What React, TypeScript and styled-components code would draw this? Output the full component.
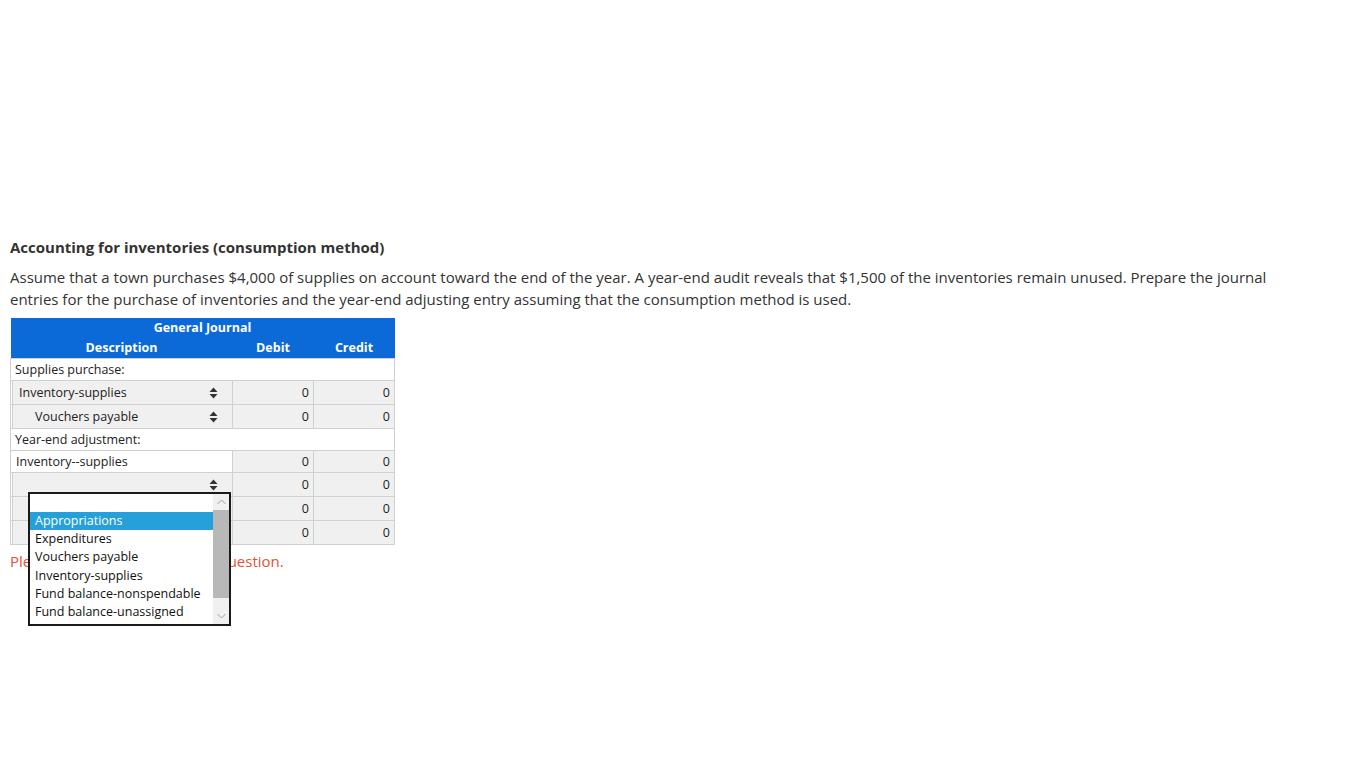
import styled, { createGlobalStyle } from 'styled-components';

const GlobalStyle = createGlobalStyle`
  body {
    margin: 0;
    background: #fff;
    font-family: "Open Sans", "Liberation Sans", sans-serif;
    color: #333;
  }
`;

const Page = styled.div`
  min-height: 768px;
  box-sizing: border-box;
  padding: 237px 10px 0 10px;
`;

const Title = styled.h3`
  margin: 0 0 9px 0;
  font-size: 15px;
  font-weight: 700;
  line-height: 20px;
  color: #333;
`;

const Prompt = styled.p`
  margin: 0 0 8px 0;
  font-size: 15px;
  line-height: 22px;
  max-width: 1275px;
  color: #333;
`;

const TableWrap = styled.div`
  position: relative;
  width: 384px;
`;

const Journal = styled.table`
  border-collapse: collapse;
  width: 384px;
  table-layout: fixed;
  font-size: 12.5px;
  color: #222;
`;

const HeadCell = styled.th`
  background: #0b6ad8;
  color: #fff;
  font-weight: 700;
  font-size: 12.5px;
  height: 20px;
  padding: 0;
  line-height: 20px;
  text-align: center;
`;

const LabelCell = styled.td`
  border: 1px solid #d0d0d0;
  background: #fff;
  height: 21px;
  padding: 0 0 0 4px;
  line-height: 20px;
`;

const DescCell = styled.td<{ $plain?: boolean }>`
  border: 1px solid #d0d0d0;
  background: #fff;
  height: ${p => (p.$plain ? '21px' : '23px')};
  padding: 0 0 0 1px;
`;

const SelectBox = styled.div<{ $indent?: boolean }>`
  display: flex;
  align-items: center;
  justify-content: space-between;
  height: 23px;
  padding: 0 14px 0 ${p => (p.$indent ? '22px' : '6px')};
  border-left: 1px solid #d0d0d0;
  background: #f0f0f0;
  white-space: nowrap;
`;

const PlainText = styled.div`
  padding-left: 4px;
  line-height: 21px;
`;

const NumCell = styled.td<{ $short?: boolean }>`
  border: 1px solid #d0d0d0;
  background: #f0f0f0;
  height: ${p => (p.$short ? '21px' : '23px')};
  padding: 0 4px 0 0;
  text-align: right;
`;

const Warning = styled.div`
  margin-top: 5px;
  font-size: 15px;
  color: #e0533a;
  line-height: 22px;
`;

const ListBox = styled.div`
  position: absolute;
  left: 18px;
  top: 174px;
  width: 199px;
  height: 130px;
  border: 2px solid #1a1a1a;
  background: #fff;
  display: flex;
  overflow: hidden;
  z-index: 2;
`;

const Options = styled.ul`
  list-style: none;
  margin: 0;
  padding: 0;
  flex: 1;
  overflow: hidden;
  font-size: 12.5px;
  color: #111;
`;

const Option = styled.li<{ $active?: boolean }>`
  height: 18.2px;
  line-height: 18px;
  padding-left: 5px;
  white-space: nowrap;
  background: ${p => (p.$active ? '#26a0da' : 'transparent')};
  color: ${p => (p.$active ? '#fff' : '#111')};
`;

const Blank = styled.li`
  height: 18px;
`;

const Scrollbar = styled.div`
  width: 16px;
  background: #f0f0f0;
  display: flex;
  flex-direction: column;
`;

const ScrollArrow = styled.div`
  height: 16px;
  display: flex;
  align-items: center;
  justify-content: center;
`;

const Track = styled.div`
  flex: 1;
  display: flex;
  flex-direction: column;
`;

const Thumb = styled.div`
  height: 88px;
  background: #b8b8b8;
`;

const SortIcon = () => (
  <svg width="9" height="12" viewBox="0 0 9 12">
    <path d="M4.5 0.5 L8.5 5 L0.5 5 Z" fill="#333" />
    <path d="M0.5 7 L8.5 7 L4.5 11.5 Z" fill="#333" />
  </svg>
);

const Chevron = (props: { up?: boolean }) => (
  <svg width="9" height="6" viewBox="0 0 9 6">
    <path
      d={props.up ? 'M0.5 5 L4.5 1 L8.5 5' : 'M0.5 1 L4.5 5 L8.5 1'}
      fill="none"
      stroke="#a0a0a0"
      strokeWidth="1"
    />
  </svg>
);

const accounts = [
  'Appropriations',
  'Expenditures',
  'Vouchers payable',
  'Inventory-supplies',
  'Fund balance-nonspendable',
  'Fund balance-unassigned',
  'Cash',
];

const SelectRow = (props: { label?: string; indent?: boolean }) => (
  <tr>
    <DescCell>
      <SelectBox $indent={props.indent}>
        <span>{props.label}</span>
        <SortIcon />
      </SelectBox>
    </DescCell>
    <NumCell>0</NumCell>
    <NumCell>0</NumCell>
  </tr>
);

const App = () => (
  <>
    <GlobalStyle />
    <Page>
      <Title>Accounting for inventories (consumption method)</Title>
      <Prompt>
        Assume that a town purchases $4,000 of supplies on account toward the end of the year. A year-end audit
        reveals that $1,500 of the inventories remain unused. Prepare the journal entries for the purchase of
        inventories and the year-end adjusting entry assuming that the consumption method is used.
      </Prompt>
      <TableWrap>
        <Journal>
          <colgroup>
            <col style={{ width: 222 }} />
            <col style={{ width: 81 }} />
            <col style={{ width: 81 }} />
          </colgroup>
          <thead>
            <tr>
              <HeadCell colSpan={3}>General Journal</HeadCell>
            </tr>
            <tr>
              <HeadCell>Description</HeadCell>
              <HeadCell>Debit</HeadCell>
              <HeadCell>Credit</HeadCell>
            </tr>
          </thead>
          <tbody>
            <tr>
              <LabelCell colSpan={3}>Supplies purchase:</LabelCell>
            </tr>
            <SelectRow label="Inventory-supplies" />
            <SelectRow label="Vouchers payable" indent />
            <tr>
              <LabelCell colSpan={3}>Year-end adjustment:</LabelCell>
            </tr>
            <tr>
              <DescCell $plain>
                <PlainText>Inventory--supplies</PlainText>
              </DescCell>
              <NumCell $short>0</NumCell>
              <NumCell $short>0</NumCell>
            </tr>
            <SelectRow />
            <SelectRow />
            <SelectRow />
          </tbody>
        </Journal>
        <ListBox>
          <Options>
            <Blank />
            {accounts.map((a, i) => (
              <Option key={a} $active={i === 0}>
                {a}
              </Option>
            ))}
          </Options>
          <Scrollbar>
            <ScrollArrow>
              <Chevron up />
            </ScrollArrow>
            <Track>
              <Thumb />
            </Track>
            <ScrollArrow>
              <Chevron />
            </ScrollArrow>
          </Scrollbar>
        </ListBox>
      </TableWrap>
      <Warning>Please answer all parts of the question.</Warning>
    </Page>
  </>
);

export default App;
